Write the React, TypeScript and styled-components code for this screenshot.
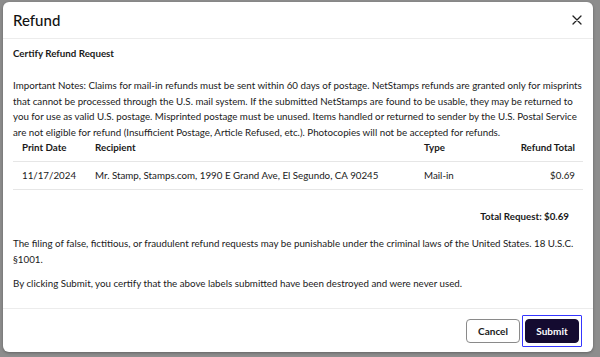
import React from "react";
import styled, { createGlobalStyle } from "styled-components";

const Global = createGlobalStyle`
  html, body { margin: 0; padding: 0; }
  body {
    background: #8d8d8d;
    font-family: Lato, "Noto Sans", sans-serif;
    color: #1a1a1a;
    width: 600px;
    height: 357px;
    overflow: hidden;
  }
`;

const Page = styled.div`
  padding: 2px 7px 0 3px;
`;

const Modal = styled.div`
  width: 590px;
  height: 350px;
  background: #fff;
  border-radius: 6px;
  display: flex;
  flex-direction: column;
  box-shadow: 0 1px 3px rgba(0, 0, 0, 0.3);
  overflow: hidden;
`;

const Header = styled.div`
  height: 36px;
  flex: none;
  display: flex;
  align-items: center;
  justify-content: space-between;
  padding: 0 9px 0 10px;
  border-bottom: 1px solid #ececec;
`;

const Title = styled.h2`
  margin: 0;
  font-size: 15px;
  font-weight: 500;
  color: #111;
`;

const Close = styled.button`
  border: 0;
  background: none;
  padding: 0;
  width: 14px;
  height: 14px;
  display: flex;
  align-items: center;
  justify-content: center;
  color: #222;
`;

const Body = styled.div`
  flex: 1;
  padding: 7px 10px 0 10px;
  font-size: 9.75px;
  line-height: 15.5px;
`;

const Subtitle = styled.div`
  font-weight: 700;
  margin-bottom: 16.5px;
`;

const Para = styled.p<{ $gap?: number }>`
  margin: 0 0 ${(p) => p.$gap ?? 0}px 0;
`;

const Table = styled.div`
  width: 570px;
`;

const Row = styled.div<{ $head?: boolean }>`
  display: grid;
  grid-template-columns: 73px 329px 1fr 80px;
  align-items: ${(p) => (p.$head ? "start" : "center")};
  height: ${(p) => (p.$head ? 21 : 27)}px;
  padding: 0 8px 0 9px;
  border-bottom: 1px solid #e6e6e6;
  font-weight: ${(p) => (p.$head ? 700 : 400)};
`;

const Right = styled.span`
  text-align: right;
`;

const Total = styled.div`
  text-align: right;
  font-weight: 700;
  padding-right: 14px;
  margin: 19px 0 11.5px 0;
`;

const Footer = styled.div`
  height: 43px;
  flex: none;
  border-top: 1px solid #ececec;
  display: flex;
  align-items: center;
  justify-content: flex-end;
  gap: 5px;
  padding-right: 14px;
`;

const Btn = styled.button<{ $primary?: boolean }>`
  position: relative;
  font-family: Lato, "Noto Sans", sans-serif;
  font-size: 10px;
  font-weight: 700;
  height: 24px;
  width: 54px;
  padding: 0;
  border-radius: 4px;
  border: 1px solid ${(p) => (p.$primary ? "#140b30" : "#8a8a8a")};
  background: ${(p) => (p.$primary ? "#140b30" : "#fff")};
  color: ${(p) => (p.$primary ? "#fff" : "#1a1a1a")};
  outline: none;

  &::after {
    content: "";
    display: ${(p) => (p.$primary ? "block" : "none")};
    position: absolute;
    inset: -5px -4px -5px -4px;
    border: 1.5px solid #3535ff;
    border-radius: 1px;
    pointer-events: none;
  }
`;

export default function App() {
  return (
    <>
      <Global />
      <Page>
        <Modal>
          <Header>
            <Title>Refund</Title>
            <Close aria-label="Close">
              <svg width="10" height="10" viewBox="0 0 10 10">
                <path d="M1 1 L9 9 M9 1 L1 9" stroke="#222" strokeWidth="1.3" strokeLinecap="round" />
              </svg>
            </Close>
          </Header>
          <Body>
            <Subtitle>Certify Refund Request</Subtitle>
            <Para>
              Important Notes: Claims for mail-in refunds must be sent within 60 days of postage. NetStamps refunds are granted only for misprints that cannot be processed through the U.S. mail system. If the submitted NetStamps are found to be usable, they may be returned to you for use as valid U.S. postage. Misprinted postage must be unused. Items handled or returned to sender by the U.S. Postal Service are not eligible for refund (Insufficient Postage, Article Refused, etc.). Photocopies will not be accepted for refunds.
            </Para>
            <Table>
              <Row $head>
                <span>Print Date</span>
                <span>Recipient</span>
                <span>Type</span>
                <Right>Refund Total</Right>
              </Row>
              <Row>
                <span>11/17/2024</span>
                <span>Mr. Stamp, Stamps.com, 1990 E Grand Ave, El Segundo, CA 90245</span>
                <span>Mail-in</span>
                <Right>$0.69</Right>
              </Row>
            </Table>
            <Total>Total Request: $0.69</Total>
            <Para $gap={8.5}>
              The filing of false, fictitious, or fraudulent refund requests may be punishable under the criminal laws of the United States. 18 U.S.C. §1001.
            </Para>
            <Para>By clicking Submit, you certify that the above labels submitted have been destroyed and were never used.</Para>
          </Body>
          <Footer>
            <Btn>Cancel</Btn>
            <Btn $primary>Submit</Btn>
          </Footer>
        </Modal>
      </Page>
    </>
  );
}
